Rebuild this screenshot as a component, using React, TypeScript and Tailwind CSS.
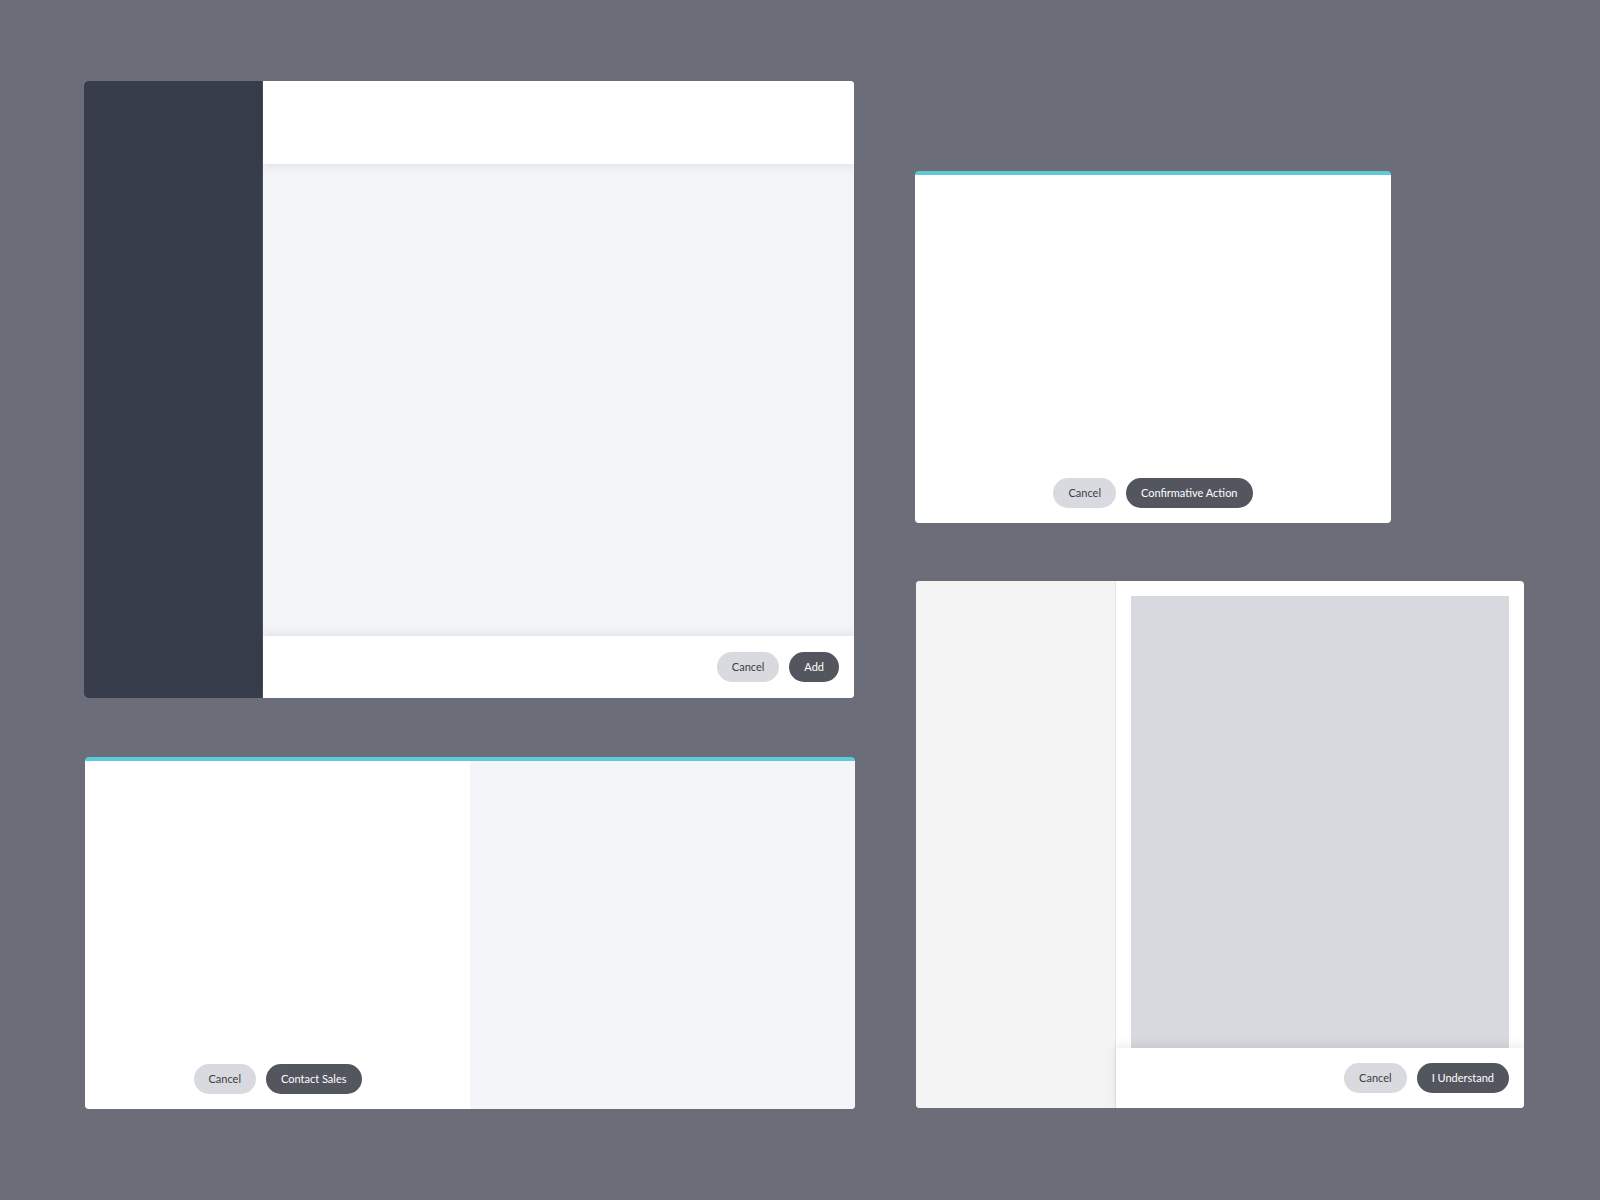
import React from 'react';

const font = { fontFamily: 'Lato, "Noto Sans", sans-serif' };

const CancelButton: React.FC = () => (
  <button className="h-[30px] rounded-full bg-[#d9dadf] px-[15px] text-[11px] text-[#3a3d45]">
    Cancel
  </button>
);

const PrimaryButton: React.FC<{ label: string }> = ({ label }) => (
  <button className="h-[30px] rounded-full bg-[#53565f] px-[15px] text-[11px] text-white">
    {label}
  </button>
);

// big modal with dark sidebar, header and footer
const SidebarModal: React.FC = () => (
  <div className="flex h-[617px] w-[770px] overflow-hidden rounded-[4px] bg-white">
    <div className="w-[179px] shrink-0 border-r border-[#4a5060] bg-[#373d4a]" />
    <div className="flex flex-1 flex-col">
      <div className="relative z-10 h-[83px] bg-white shadow-[0_2px_10px_rgba(0,0,0,0.09)]" />
      <div className="flex-1 bg-[#f4f5f9]" />
      <div className="relative z-10 flex h-[62px] items-center justify-end gap-[10px] bg-white pr-[15px] shadow-[0_-2px_10px_rgba(0,0,0,0.09)]">
        <CancelButton />
        <PrimaryButton label="Add" />
      </div>
    </div>
  </div>
);

const ConfirmModal: React.FC = () => (
  <div className="flex h-[352px] w-[476px] flex-col justify-end overflow-hidden rounded-[4px] border-t-4 border-[#5ccad9] bg-white pb-[15px]">
    <div className="flex justify-center gap-[10px]">
      <CancelButton />
      <PrimaryButton label="Confirmative Action" />
    </div>
  </div>
);

const SalesModal: React.FC = () => (
  <div className="flex h-[352px] w-[770px] overflow-hidden rounded-[4px] border-t-4 border-[#5ccad9] bg-white">
    <div className="flex w-[385px] flex-col justify-end pb-[15px]">
      <div className="flex justify-center gap-[10px]">
        <CancelButton />
        <PrimaryButton label="Contact Sales" />
      </div>
    </div>
    <div className="flex-1 bg-[#f4f5f9]" />
  </div>
);

const SplitModal: React.FC = () => (
  <div className="flex h-[527px] w-[608px] overflow-hidden rounded-[4px] bg-white">
    <div className="w-[200px] shrink-0 border-r border-[#e2e3e6] bg-[#f4f4f5]" />
    <div className="flex flex-1 flex-col">
      <div className="flex-1 px-[15px] pt-[15px]">
        <div className="h-full bg-[#d8d9de]" />
      </div>
      <div className="relative z-10 flex h-[60px] items-center justify-end gap-[10px] bg-white pr-[15px] shadow-[0_-2px_10px_rgba(0,0,0,0.09)]">
        <CancelButton />
        <PrimaryButton label="I Understand" />
      </div>
    </div>
  </div>
);

const App: React.FC = () => (
  <div className="min-h-[1200px] w-full bg-[#6b6e78] pl-[84px] pt-[81px]" style={font}>
    <div className="flex gap-[60px]">
      <div className="flex flex-col gap-[59px]">
        <SidebarModal />
        <div className="pl-[1px]">
          <SalesModal />
        </div>
      </div>
      <div className="mt-[90px] flex flex-col gap-[58px]">
        <ConfirmModal />
        <div className="pl-[1px]">
          <SplitModal />
        </div>
      </div>
    </div>
  </div>
);

export default App;
